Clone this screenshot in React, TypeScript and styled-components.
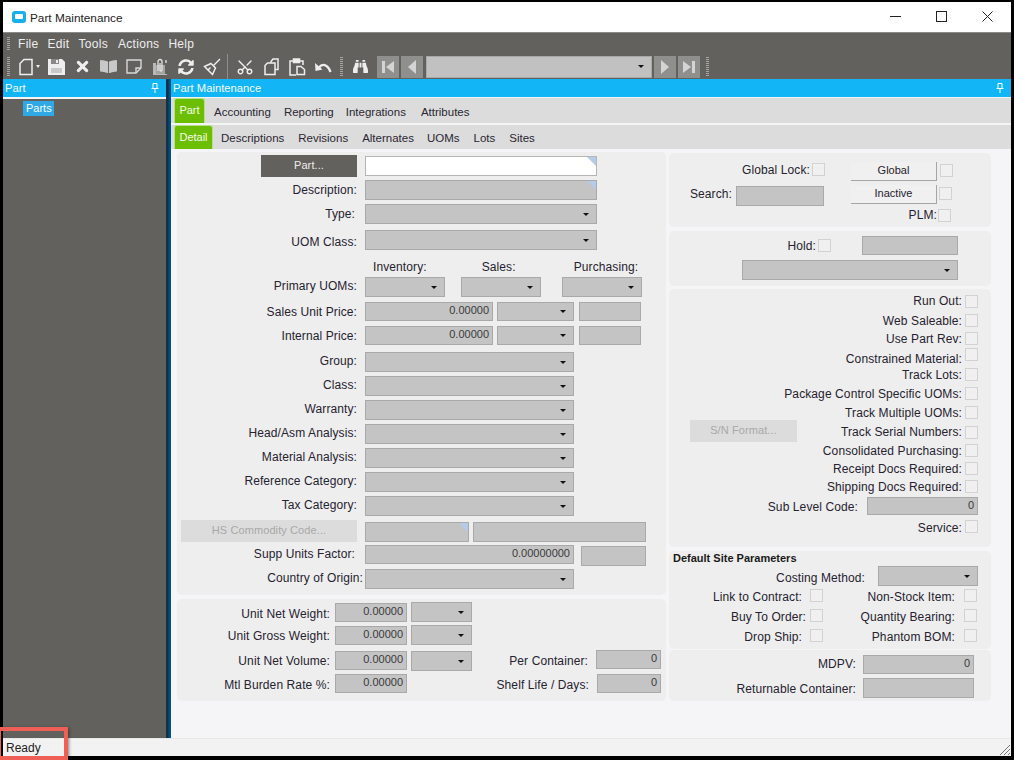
import React from 'react'
import styled, {createGlobalStyle} from 'styled-components'
import {FaBinoculars, FaBookOpen, FaSyncAlt, FaTimes} from 'react-icons/fa'
import {Scissors} from 'lucide-react'

const GlobalStyle = createGlobalStyle`
    html, body {
        margin: 0;
        padding: 0;
        background: #000;
    }
    body {
        font-family: "Liberation Sans", Arial, sans-serif;
        font-size: 12px;
        color: #26222e;
    }
`

const Screen = styled.div`
    position: relative;
    width: 1014px;
    height: 760px;
    box-sizing: border-box;
    padding: 2px 3px 4px;
    overflow: hidden;
`
const Win = styled.div`
    display: flex;
    flex-direction: column;
    height: 754px;
    background: #f5f5f8;
`
const TitleBar = styled.div`
    display: flex;
    align-items: center;
    height: 30px;
    flex: none;
    box-sizing: border-box;
    background: #fff;
    padding: 0 1px 0 9px;
    font-size: 11.8px;
    color: #222;
`
const TitleText = styled.span`
    margin: 1px 0 0 4px;
    flex: 1;
`
const WinButton = styled.div`
    width: 46px;
    height: 28px;
    margin-bottom: 2px;
    display: flex;
    align-items: center;
    justify-content: center;
    svg { display: block; }
`
const MenuBar = styled.div`
    display: flex;
    align-items: center;
    height: 21px;
    flex: none;
    background: #63615e;
    border-top: 1px solid #8a8a88;
    color: #eee;
    padding-left: 4px;
    letter-spacing: .3px;
`
const Grip = styled.div<{$h: number}>`
    width: 3px;
    height: ${p => p.$h}px;
    flex: none;
    background: repeating-linear-gradient(to bottom, #a5a5a3 0, #a5a5a3 1px, transparent 1px, transparent 2px);
`
const MenuItem = styled.span<{$left: number}>`
    margin-left: ${p => p.$left}px;
`
const ToolBar = styled.div`
    display: flex;
    align-items: center;
    height: 25px;
    flex: none;
    background: #63615e;
    padding-left: 4px;
    color: #eee;
`
const ToolIcon = styled.div<{$w?: number; $left?: number}>`
    width: ${p => p.$w ?? 26}px;
    margin-left: ${p => p.$left ?? 0}px;
    flex: none;
    display: flex;
    justify-content: center;
    svg { display: block; }
`
const ToolSep = styled.div`
    width: 1px;
    height: 25px;
    flex: none;
    background: #8f8e8c;
`
const NavButton = styled.div<{$left: number}>`
    width: 22px;
    height: 22px;
    flex: none;
    margin-left: ${p => p.$left}px;
    background: #8f8f8d;
    display: flex;
    align-items: center;
    justify-content: center;
`
const NavSelect = styled.div`
    width: 226px;
    height: 22px;
    flex: none;
    margin-left: 3px;
    box-sizing: border-box;
    background: #c1c1c1;
    border: 1px solid #a8a8a8;
    display: flex;
    align-items: center;
    justify-content: flex-end;
    padding-right: 7px;
`
const Arrow = styled.span`
    width: 0;
    height: 0;
    border-left: 3px solid transparent;
    border-right: 3px solid transparent;
    border-top: 3px solid #111;
`
const Main = styled.div`
    display: flex;
    flex: 1;
    min-height: 0;
`
const SidePane = styled.div`
    width: 163px;
    flex: none;
    background: #63615e;
`
const Splitter = styled.div`
    width: 5px;
    flex: none;
    background: linear-gradient(to right, #23323d 0, #0a2f4a 40%, #004f80 60%);
`
const WorkPane = styled.div`
    flex: 1;
    min-width: 0;
    display: flex;
    flex-direction: column;
`
const PaneHeader = styled.div`
    display: flex;
    align-items: center;
    justify-content: space-between;
    box-sizing: border-box;
    height: 18px;
    flex: none;
    padding: 0 7px 1px 2px;
    background: #12b5f5;
    color: #f4fbff;
    font-size: 11.25px;
`
const TreeItem = styled.div`
    border-top: 2px solid #f4f4f4;
    padding: 2px 0 0 20px;
    span {
        display: inline-block;
        background: #2fa9e6;
        color: #f4fbff;
        font-size: 11px;
        padding: 0 3px 1px;
        width: 25px;
        line-height: 14px;
    }
`
const TabStrip = styled.div<{$first?: boolean}>`
    display: flex;
    align-items: flex-start;
    height: ${p => p.$first ? 25 : 24}px;
    background: #dcdcdc;
    border-top: ${p => p.$first ? 1 : 2}px solid #f4f4f4;
    padding-left: 3px;
    flex: none;
    font-size: 11.5px;
    line-height: ${p => p.$first ? 28 : 26}px;
`
const ActiveTab = styled.div<{$w: number; $right: number; $h: number}>`
    width: ${p => p.$w}px;
    height: ${p => p.$h}px;
    box-sizing: border-box;
    background: #6cbf00;
    border: 1px solid #b8e08a;
    border-bottom: none;
    border-radius: 3px 3px 0 0;
    color: #f6fbef;
    font-size: 11px;
    text-align: center;
    line-height: 22px;
    margin-right: ${p => p.$right}px;
`
const Tab = styled.span<{$gap?: number}>`
    margin-right: ${p => p.$gap ?? 13}px;
    color: #2b2733;
`
const Body = styled.div`
    flex: 1;
    min-height: 0;
    display: flex;
    gap: 3px;
    padding: 3px 0 0 6px;
`
const LeftCol = styled.div`
    width: 489px;
    flex: none;
    display: flex;
    flex-direction: column;
    gap: 4px;
`
const RightCol = styled.div`
    width: 322px;
    flex: none;
    padding-top: 1px;
`
const Panel = styled.section<{$top?: number; $bottom: number}>`
    background: #eeeeee;
    border-radius: 5px;
    margin-top: ${p => p.$top ?? 0}px;
    padding-bottom: ${p => p.$bottom}px;
    overflow: hidden;
    display: flow-root;
`
const Row = styled.div<{$top: number; $h: number}>`
    display: flex;
    align-items: flex-start;
    height: ${p => p.$h}px;
    margin-top: ${p => p.$top}px;
`
const Label = styled.div<{$w?: number; $pad?: number; $top?: number}>`
    width: ${p => p.$w ? `${p.$w}px` : 'auto'};
    flex: none;
    box-sizing: border-box;
    margin-top: ${p => p.$top ?? 3}px;
    padding-right: ${p => p.$pad ?? 0}px;
    text-align: right;
    line-height: 14px;
    white-space: nowrap;
    letter-spacing: .1px;
`
const Input = styled.div<{$w: number; $h?: number; $left?: number; $top?: number; $white?: boolean; $corner?: boolean}>`
    position: relative;
    width: ${p => p.$w}px;
    height: ${p => p.$h ?? 20}px;
    flex: none;
    box-sizing: border-box;
    margin-left: ${p => p.$left ?? 0}px;
    margin-top: ${p => p.$top ?? 0}px;
    background: ${p => p.$white ? '#fff' : '#c4c4c4'};
    border: 1px solid ${p => p.$white ? '#b5b5b5' : '#a9a9a9'};
    padding-right: 3px;
    text-align: right;
    font-size: 11px;
    line-height: 15px;
    color: #3a3a3a;
    ${p => p.$corner ? `
    &::after {
        content: '';
        position: absolute;
        top: 0;
        right: 0;
        width: 9px;
        height: 9px;
        background: #b6cbe8;
        clip-path: polygon(0 0, 100% 0, 100% 100%);
    }` : ''}
`
const Select = styled.div<{$w: number; $h?: number; $left?: number; $top?: number}>`
    width: ${p => p.$w}px;
    height: ${p => p.$h ?? 20}px;
    flex: none;
    box-sizing: border-box;
    margin-left: ${p => p.$left ?? 0}px;
    margin-top: ${p => p.$top ?? 0}px;
    background: #c4c4c4;
    border: 1px solid #a9a9a9;
    display: flex;
    align-items: center;
    justify-content: flex-end;
    padding-right: 7px;
`
const Check = styled.div<{$left?: number; $top?: number}>`
    width: 13px;
    height: 13px;
    flex: none;
    box-sizing: border-box;
    margin-left: ${p => p.$left ?? 0}px;
    margin-top: ${p => p.$top ?? 0}px;
    background: #f0f0f0;
    border: 1px solid #d2d2d2;
`
const LabelSlot = styled.div<{$w: number}>`
    width: ${p => p.$w}px;
    flex: none;
    box-sizing: border-box;
    display: flex;
    justify-content: flex-end;
`
const PartButton = styled.div<{$w: number; $left?: number; $top?: number; $off?: boolean}>`
    width: ${p => p.$w}px;
    height: 22px;
    flex: none;
    margin-left: ${p => p.$left ?? 0}px;
    margin-top: ${p => p.$top ?? 0}px;
    background: ${p => p.$off ? '#dcdcdc' : '#63615e'};
    color: ${p => p.$off ? '#a8a8a8' : '#ececec'};
    font-size: 11px;
    letter-spacing: .1px;
    text-align: center;
    line-height: 21px;
`
const FlatButton = styled.div<{$left: number}>`
    width: 86px;
    height: 19px;
    flex: none;
    box-sizing: border-box;
    margin-left: ${p => p.$left}px;
    background: #f0f0f0;
    border-right: 1px solid #a5a5a5;
    border-bottom: 1px solid #a5a5a5;
    font-size: 11px;
    text-align: center;
    line-height: 17px;
`
const RightGroup = styled.div`
    margin-left: auto;
    display: flex;
    align-items: flex-start;
    gap: 8px;
    padding-right: 5px;
`
const Heading = styled.div<{$left: number}>`
    margin-left: ${p => p.$left}px;
    line-height: 14px;
    letter-spacing: .1px;
`
const PanelTitle = styled.div`
    font-size: 11px;
    font-weight: bold;
    line-height: 14px;
    padding-left: 4px;
    color: #1a1a1a;
`
const Status = styled.div`
    height: 18px;
    flex: none;
    position: relative;
    background: #f2f2f2;
    border-top: 1px solid #e8e8e8;
    box-sizing: border-box;
    padding-left: 3px;
    line-height: 18px;
    color: #222;
`
const ResizeGrip = styled.svg`
    position: absolute;
    right: 0;
    bottom: 0;
`
const Highlight = styled.div`
    position: absolute;
    left: -3px;
    top: 727px;
    width: 71px;
    height: 33px;
    box-sizing: border-box;
    border: 4px solid #ee6055;
    box-shadow: 1px 1px 3px rgba(0,0,0,.45);
`
const SmallArrow = styled.span`
    width: 0;
    height: 0;
    margin-left: 1px;
    border-left: 2.5px solid transparent;
    border-right: 2.5px solid transparent;
    border-top: 3px solid #eee;
`
const TurnedScissors = styled(Scissors)`
    transform: rotate(-90deg);
`

const NewDoc = () => (
    <svg width="16" height="18" viewBox="0 0 16 18" fill="none" stroke="#eee" strokeWidth="1.5">
        <path d="M6 1.5h8v15H2V5.5z" />
    </svg>
)
const SaveIcon = () => (
    <svg width="17" height="16" viewBox="0 0 17 16">
        <path d="M0 0h14l3 3v13H0z" fill="#eee" />
        <rect x="3" y="0" width="8" height="5" fill="#8a8987" />
        <rect x="8" y="1" width="2" height="3" fill="#eee" />
        <rect x="3" y="9" width="11" height="5" fill="#c9c9c8" />
    </svg>
)
const NoteIcon = () => (
    <svg width="16" height="15" viewBox="0 0 16 15" fill="none" stroke="#d8d8d8" strokeWidth="1.4">
        <path d="M1 1h14v8l-5 5H1z" />
        <path d="M10 14V9h5" />
    </svg>
)
const AttachIcon = () => (
    <svg width="16" height="18" viewBox="0 0 16 18">
        <path d="M1 5h3v11h11V5h-2V2h2v15H1z" fill="#b8b8b6" />
        <rect x="4" y="7" width="9" height="9" fill="#a3a3a1" />
        <path d="M6 13V3.5a2 2 0 0 1 4 0V12a1 1 0 0 1-2 0V5" fill="none" stroke="#e2e2e2" strokeWidth="1.3" />
    </svg>
)
const BroomIcon = () => (
    <svg width="18" height="18" viewBox="0 0 18 18" fill="none" stroke="#eee" strokeWidth="1.5">
        <path d="M17 1l-6.5 6.5" />
        <path d="M8 5.5l4.5 4.5-3 6.5L1.5 8.5z" />
        <path d="M5 12l2.5-2.5" />
    </svg>
)
const CopyIcon = () => (
    <svg width="15" height="18" viewBox="0 0 15 18" fill="none" stroke="#eee" strokeWidth="1.5">
        <path d="M7 5V3.5L9 1h5v10.5h-3" />
        <path d="M3.5 5H11v11.5H1V7.5z" />
    </svg>
)
const PasteIcon = () => (
    <svg width="17" height="18" viewBox="0 0 17 18" fill="none" stroke="#eee" strokeWidth="1.5">
        <path d="M4 3H1v14h6" />
        <path d="M11 3h3v4" />
        <rect x="4.5" y="1" width="6" height="3.5" fill="#eee" />
        <path d="M8 8.5h4l3.5 3v5H8z" />
    </svg>
)
const UndoIcon = () => (
    <svg width="18" height="12" viewBox="0 0 18 12">
        <path d="M5 6.5C8 2.5 13.5 2.5 16.5 11" fill="none" stroke="#eee" strokeWidth="2.4" />
        <path d="M1 2l.5 8 7-1.5z" fill="#eee" />
    </svg>
)
const First = () => (
    <svg width="14" height="14" viewBox="0 0 14 14" fill="#d4d4d4"><rect x="1" y="1" width="3" height="12" /><path d="M13 1v12L5 7z" /></svg>
)
const Prev = () => (
    <svg width="14" height="14" viewBox="0 0 14 14" fill="#d4d4d4"><path d="M11 0v14L3 7z" /></svg>
)
const Next = () => (
    <svg width="14" height="14" viewBox="0 0 14 14" fill="#d4d4d4"><path d="M3 0v14l8-7z" /></svg>
)
const Last = () => (
    <svg width="14" height="14" viewBox="0 0 14 14" fill="#d4d4d4"><path d="M1 1v12l8-6z" /><rect x="10" y="1" width="3" height="12" /></svg>
)

function Pin() {
    return (
        <svg width="8" height="10" viewBox="0 0 8 10" fill="none" stroke="#fff">
            <path d="M2 .5h4v5H2zM.5 5.5h7M4 5.5V10" />
        </svg>
    )
}

const lookups = ['Group:', 'Class:', 'Warranty:', 'Head/Asm Analysis:', 'Material Analysis:', 'Reference Category:', 'Tax Category:']

const flags = [
    {label: 'Run Out:', gap: 6, text: -1},
    {label: 'Web Saleable:', gap: 6, text: 0},
    {label: 'Use Part Rev:', gap: 5, text: 0},
    {label: 'Constrained Material:', gap: 3, text: 4},
    {label: 'Track Lots:', gap: 7, text: 0},
    {label: 'Package Control Specific UOMs:', gap: 6, text: 0},
    {label: 'Track Multiple UOMs:', gap: 6, text: 0},
]
const flags2 = [
    {label: 'Consolidated Purchasing:', gap: 5},
    {label: 'Receipt Docs Required:', gap: 5},
    {label: 'Shipping Docs Required:', gap: 5},
]

function TopForm() {
    return (
        <Panel $bottom={6}>
            <Row $top={3} $h={22}>
                <LabelSlot $w={180}><PartButton $w={96}>Part...</PartButton></LabelSlot>
                <Input $w={232} $left={8} $top={1} $white $corner />
            </Row>
            <Row $top={3} $h={20}>
                <Label $w={188} $pad={8}>Description:</Label>
                <Input $w={232} $corner />
            </Row>
            <Row $top={4} $h={20}>
                <Label $w={188} $pad={10}>Type:</Label>
                <Select $w={232}><Arrow /></Select>
            </Row>
            <Row $top={6} $h={20}>
                <Label $w={188} $pad={8} $top={5}>UOM Class:</Label>
                <Select $w={232}><Arrow /></Select>
            </Row>
            <Row $top={10} $h={14}>
                <Heading $left={196}>Inventory:</Heading>
                <Heading $left={55}>Sales:</Heading>
                <Heading $left={58}>Purchasing:</Heading>
            </Row>
            <Row $top={3} $h={20}>
                <Label $w={188} $pad={8} $top={2}>Primary UOMs:</Label>
                <Select $w={80}><Arrow /></Select>
                <Select $w={80} $left={16}><Arrow /></Select>
                <Select $w={80} $left={21}><Arrow /></Select>
            </Row>
            <Row $top={5} $h={19}>
                <Label $w={188} $pad={8}>Sales Unit Price:</Label>
                <Input $w={128} $h={19}>0.00000</Input>
                <Select $w={77} $h={19} $left={4}><Arrow /></Select>
                <Input $w={62} $h={19} $left={5} />
            </Row>
            <Row $top={5} $h={19}>
                <Label $w={188} $pad={8}>Internal Price:</Label>
                <Input $w={128} $h={19}>0.00000</Input>
                <Select $w={77} $h={19} $left={4}><Arrow /></Select>
                <Input $w={62} $h={19} $left={5} />
            </Row>
            {lookups.map((label, i) => (
                <Row key={label} $top={i === 0 ? 7 : 4} $h={20}>
                    <Label $w={188} $pad={8} $top={2}>{label}</Label>
                    <Select $w={209}><Arrow /></Select>
                </Row>
            ))}
            <Row $top={4} $h={22}>
                <PartButton $w={176} $left={4} $off>HS Commodity Code...</PartButton>
                <Input $w={104} $left={8} $top={2} $corner />
                <Input $w={173} $left={4} $top={2} />
            </Row>
            <Row $top={3} $h={21}>
                <Label $w={188} $pad={10} $top={2}>Supp Units Factor:</Label>
                <Input $w={209} $h={19}>0.00000000</Input>
                <Input $w={65} $left={7} $top={1} />
            </Row>
            <Row $top={3} $h={20}>
                <Label $w={188} $pad={2} $top={2}>Country of Origin:</Label>
                <Select $w={209}><Arrow /></Select>
            </Row>
        </Panel>
    )
}

function WeightForm() {
    return (
        <Panel $bottom={8}>
            <Row $top={3} $h={20}>
                <Label $w={158} $pad={5} $top={5}>Unit Net Weight:</Label>
                <Input $w={72} $h={19} $top={1}>0.00000</Input>
                <Select $w={61} $left={4}><Arrow /></Select>
            </Row>
            <Row $top={3} $h={20}>
                <Label $w={158} $pad={5} $top={4}>Unit Gross Weight:</Label>
                <Input $w={72} $h={19} $top={1}>0.00000</Input>
                <Select $w={61} $left={4}><Arrow /></Select>
            </Row>
            <Row $top={5} $h={21}>
                <Label $w={158} $pad={5} $top={4}>Unit Net Volume:</Label>
                <Input $w={72} $h={19} $top={1}>0.00000</Input>
                <Select $w={61} $left={4} $top={1}><Arrow /></Select>
                <RightGroup>
                    <Label $top={4}>Per Container:</Label>
                    <Input $w={65} $h={19}>0</Input>
                </RightGroup>
            </Row>
            <Row $top={3} $h={19}>
                <Label $w={158} $pad={5} $top={4}>Mtl Burden Rate %:</Label>
                <Input $w={72} $h={19}>0.00000</Input>
                <RightGroup>
                    <Label $top={4}>Shelf Life / Days:</Label>
                    <Input $w={64} $h={19}>0</Input>
                </RightGroup>
            </Row>
        </Panel>
    )
}

function SearchPanel() {
    return (
        <Panel $bottom={5}>
            <Row $top={9} $h={19}>
                <Label $w={141} $top={1}>Global Lock:</Label>
                <Check $left={2} $top={1} />
                <FlatButton $left={26}>Global</FlatButton>
                <Check $left={3} $top={2} />
            </Row>
            <Row $top={4} $h={21}>
                <Label $w={63} $top={2}>Search:</Label>
                <Input $w={88} $left={4} $top={1} />
                <FlatButton $left={27}>Inactive</FlatButton>
                <Check $left={2} $top={2} />
            </Row>
            <Row $top={3} $h={13}>
                <Label $w={268} $top={-1}>PLM:</Label>
                <Check $left={1} />
            </Row>
        </Panel>
    )
}

function HoldPanel() {
    return (
        <Panel $top={4} $bottom={6}>
            <Row $top={5} $h={19}>
                <Label $w={147} $top={3}>Hold:</Label>
                <Check $left={2} $top={3} />
                <Input $w={96} $h={19} $left={31} />
            </Row>
            <Row $top={5} $h={20}>
                <Select $w={216} $left={73}><Arrow /></Select>
            </Row>
        </Panel>
    )
}

function FlagsPanel() {
    return (
        <Panel $top={3} $bottom={14}>
            {flags.map(f => (
                <Row key={f.label} $top={f.gap} $h={13}>
                    <Label $w={293} $top={f.text}>{f.label}</Label>
                    <Check $left={3} />
                </Row>
            ))}
            <Row $top={7} $h={13}>
                <PartButton $w={107} $left={21} $top={-6} $off>S/N Format...</PartButton>
                <Label $w={165} $top={-1}>Track Serial Numbers:</Label>
                <Check $left={3} />
            </Row>
            {flags2.map(f => (
                <Row key={f.label} $top={f.gap} $h={13}>
                    <Label $w={293} $top={0}>{f.label}</Label>
                    <Check $left={3} />
                </Row>
            ))}
            <Row $top={4} $h={18}>
                <Label $w={189} $top={3}>Sub Level Code:</Label>
                <Input $w={111} $h={18} $left={9}>0</Input>
            </Row>
            <Row $top={5} $h={13}>
                <Label $w={293} $top={1}>Service:</Label>
                <Check $left={3} />
            </Row>
        </Panel>
    )
}

function SitePanel() {
    return (
        <Panel $top={4} $bottom={7}>
            <PanelTitle>Default Site Parameters</PanelTitle>
            <Row $top={1} $h={20}>
                <Label $w={196} $top={5}>Costing Method:</Label>
                <Select $w={100} $left={13}><Arrow /></Select>
            </Row>
            <Row $top={3} $h={13}>
                <Label $w={133} $top={1}>Link to Contract:</Label>
                <Check $left={8} />
                <Label $w={132} $top={1}>Non-Stock Item:</Label>
                <Check $left={9} />
            </Row>
            <Row $top={7} $h={13}>
                <Label $w={137} $top={1}>Buy To Order:</Label>
                <Check $left={4} />
                <Label $w={132} $top={1}>Quantity Bearing:</Label>
                <Check $left={9} />
            </Row>
            <Row $top={7} $h={13}>
                <Label $w={133} $top={1}>Drop Ship:</Label>
                <Check $left={8} />
                <Label $w={132} $top={1}>Phantom BOM:</Label>
                <Check $left={9} />
            </Row>
        </Panel>
    )
}

function ContainerPanel() {
    return (
        <Panel $top={1} $bottom={3}>
            <Row $top={5} $h={19}>
                <Label $w={187} $top={2}>MDPV:</Label>
                <Input $w={111} $h={19} $left={7}>0</Input>
            </Row>
            <Row $top={4} $h={20}>
                <Label $w={187} $top={4}>Returnable Container:</Label>
                <Input $w={111} $left={7} />
            </Row>
        </Panel>
    )
}

export default function App() {
    return (
        <>
            <GlobalStyle />
            <Screen>
                <Win>
                    <TitleBar>
                        <svg width="14" height="12" viewBox="0 0 14 12">
                            <rect width="14" height="12" rx="3" fill="#17b0ea" />
                            <rect x="3" y="3" width="8" height="5" rx="1" fill="#fff" />
                        </svg>
                        <TitleText>Part Maintenance</TitleText>
                        <WinButton>
                            <svg width="11" height="11" viewBox="0 0 11 11"><path d="M0 5.5h11" stroke="#222" strokeWidth="1" /></svg>
                        </WinButton>
                        <WinButton>
                            <svg width="11" height="11" viewBox="0 0 11 11"><rect x=".5" y=".5" width="10" height="10" fill="none" stroke="#222" /></svg>
                        </WinButton>
                        <WinButton>
                            <svg width="11" height="11" viewBox="0 0 11 11"><path d="M.5.5l10 10M10.5.5l-10 10" stroke="#222" /></svg>
                        </WinButton>
                    </TitleBar>
                    <MenuBar>
                        <Grip $h={13} />
                        <MenuItem $left={8}>File</MenuItem>
                        <MenuItem $left={9}>Edit</MenuItem>
                        <MenuItem $left={9}>Tools</MenuItem>
                        <MenuItem $left={10}>Actions</MenuItem>
                        <MenuItem $left={9}>Help</MenuItem>
                    </MenuBar>
                    <ToolBar>
                        <Grip $h={20} />
                        <ToolIcon $w={18} $left={7}><NewDoc /></ToolIcon>
                        <SmallArrow />
                        <ToolIcon $w={26} $left={3}><SaveIcon /></ToolIcon>
                        <ToolIcon><FaTimes size={17} /></ToolIcon>
                        <ToolIcon><FaBookOpen size={17} color="#c8c8c8" /></ToolIcon>
                        <ToolIcon><NoteIcon /></ToolIcon>
                        <ToolIcon><AttachIcon /></ToolIcon>
                        <ToolIcon><FaSyncAlt size={16} /></ToolIcon>
                        <ToolIcon><BroomIcon /></ToolIcon>
                        <ToolIcon $w={2} $left={1}><ToolSep /></ToolIcon>
                        <ToolIcon $left={4}><TurnedScissors size={18} strokeWidth={1.9} /></ToolIcon>
                        <ToolIcon><CopyIcon /></ToolIcon>
                        <ToolIcon><PasteIcon /></ToolIcon>
                        <ToolIcon><UndoIcon /></ToolIcon>
                        <ToolIcon $w={3} $left={4}><Grip $h={20} /></ToolIcon>
                        <ToolIcon $w={26} $left={4}><FaBinoculars size={15} /></ToolIcon>
                        <NavButton $left={4}><First /></NavButton>
                        <NavButton $left={2}><Prev /></NavButton>
                        <NavSelect><Arrow /></NavSelect>
                        <NavButton $left={2}><Next /></NavButton>
                        <NavButton $left={2}><Last /></NavButton>
                        <ToolIcon $w={3} $left={6}><Grip $h={20} /></ToolIcon>
                    </ToolBar>
                    <Main>
                        <SidePane>
                            <PaneHeader>Part <Pin /></PaneHeader>
                            <TreeItem><span>Parts</span></TreeItem>
                        </SidePane>
                        <Splitter />
                        <WorkPane>
                            <PaneHeader>Part Maintenance <Pin /></PaneHeader>
                            <TabStrip $first>
                                <ActiveTab $w={31} $right={9} $h={25}>Part</ActiveTab>
                                <Tab>Accounting</Tab>
                                <Tab $gap={12}>Reporting</Tab>
                                <Tab $gap={15}>Integrations</Tab>
                                <Tab>Attributes</Tab>
                            </TabStrip>
                            <TabStrip>
                                <ActiveTab $w={39} $right={8} $h={24}>Detail</ActiveTab>
                                <Tab $gap={14}>Descriptions</Tab>
                                <Tab $gap={14}>Revisions</Tab>
                                <Tab $gap={13}>Alternates</Tab>
                                <Tab $gap={14}>UOMs</Tab>
                                <Tab $gap={14}>Lots</Tab>
                                <Tab>Sites</Tab>
                            </TabStrip>
                            <Body>
                                <LeftCol>
                                    <TopForm />
                                    <WeightForm />
                                </LeftCol>
                                <RightCol>
                                    <SearchPanel />
                                    <HoldPanel />
                                    <FlagsPanel />
                                    <SitePanel />
                                    <ContainerPanel />
                                </RightCol>
                            </Body>
                        </WorkPane>
                    </Main>
                    <Status>
                        Ready
                        <ResizeGrip width="14" height="14" viewBox="0 0 14 14" stroke="#777">
                            <path d="M13 3L3 13M13 7l-6 6M13 11l-2 2" />
                        </ResizeGrip>
                    </Status>
                </Win>
                <Highlight />
            </Screen>
        </>
    )
}
